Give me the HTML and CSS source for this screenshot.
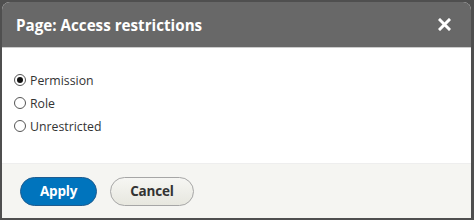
FILE: index.html
```html
<!DOCTYPE html>
<html>
<head>
<meta charset="utf-8">
<link rel="stylesheet" href="styles.css">
</head>
<body>
<div class="dialog">
  <div class="titlebar">
    <span class="title">Page: Access restrictions</span>
    <span class="close">
      <svg width="13" height="13" viewBox="0 0 13 13"><path d="M2 2 L11 11 M11 2 L2 11" stroke="#fff" stroke-width="3" stroke-linecap="square"/></svg>
    </span>
  </div>
  <div class="content">
    <label class="option"><input type="radio" name="r" checked> Permission</label>
    <label class="option"><input type="radio" name="r"> Role</label>
    <label class="option"><input type="radio" name="r"> Unrestricted</label>
  </div>
  <div class="buttons">
    <button class="btn primary">Apply</button>
    <button class="btn">Cancel</button>
  </div>
</div>
</body>
</html>
```
FILE: styles.css
```css
html, body { margin: 0; padding: 0; }
body {
  background: #4f4f4f;
  width: 474px;
  height: 220px;
  overflow: hidden;
  font-family: "Open Sans", "DejaVu Sans", sans-serif;
}
.dialog {
  margin: 2px 3px 0 2px;
  width: 469px;
  height: 216px;
  background: #fff;
  border-radius: 8px 8px 0 0;
  overflow: hidden;
  display: flex;
  flex-direction: column;
}
.titlebar {
  height: 46px;
  background: #686868;
  display: flex;
  align-items: center;
  justify-content: space-between;
  padding: 0 20px 0 14px;
  box-sizing: border-box;
  border-bottom: 1px solid #ccc;
}
.title {
  color: #fff;
  font-weight: 700;
  font-size: 15.2px;
}
.close { display: flex; }
.content {
  flex: 1;
  padding: 23px 0 0 12px;
  display: flex;
  flex-direction: column;
  gap: 5px;
  background: #fff;
}
.option {
  font-size: 12.3px;
  color: #333;
  display: flex;
  align-items: center;
  height: 18px;
}
.option input {
  appearance: none;
  -webkit-appearance: none;
  margin: 0 4px 0 0;
  width: 12px;
  height: 12px;
  border: 1px solid #555;
  border-radius: 50%;
  background: #fff;
  box-sizing: border-box;
  position: relative;
}
.option input:checked::after {
  content: "";
  position: absolute;
  left: 2px;
  top: 2px;
  width: 6px;
  height: 6px;
  border-radius: 50%;
  background: #111;
}
.buttons {
  height: 54px;
  background: #f5f5f2;
  border-top: 1px solid #eee;
  display: flex;
  align-items: center;
  gap: 13px;
  padding: 0 0 0 18px;
}
.btn {
  height: 29px;
  border-radius: 15px;
  font-family: inherit;
  font-weight: 700;
  font-size: 13.5px;
  letter-spacing: -0.2px;
  padding: 0 19px;
  border: 1px solid #a6a6a6;
  background: linear-gradient(#f6f6f3, #e7e7df);
  color: #333;
}
.btn.primary {
  background: #0074bd;
  border-color: #1e5c90;
  color: #fff;
}
```
